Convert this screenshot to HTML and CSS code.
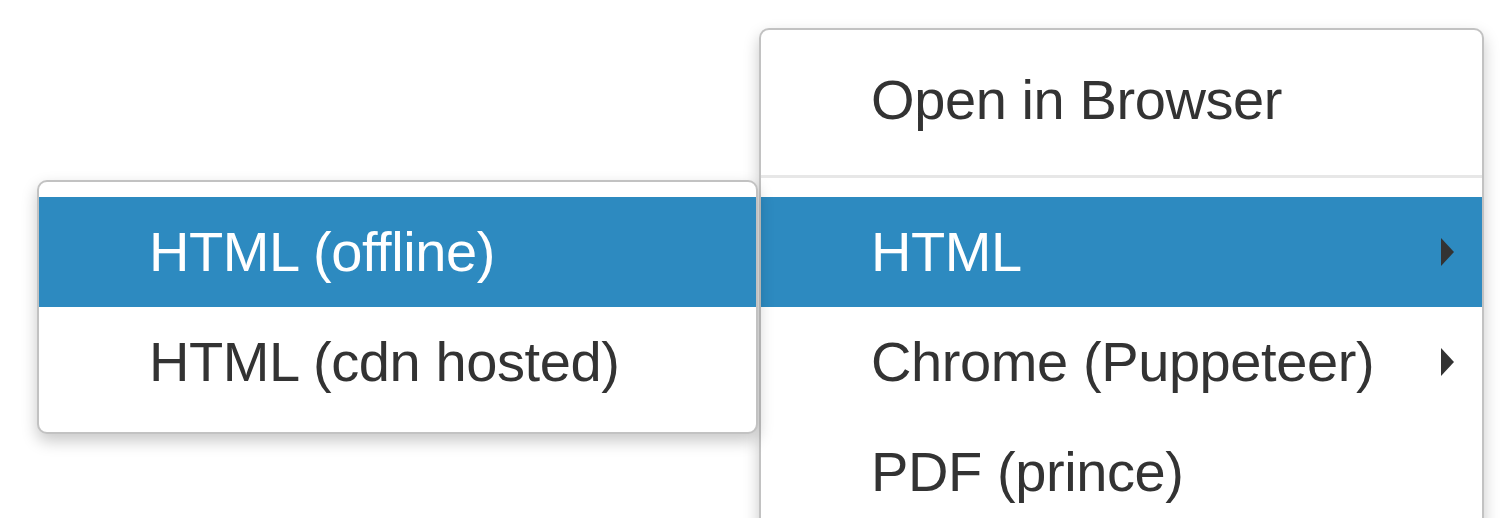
FILE: index.html
```html
<!DOCTYPE html>
<html lang="en">
<head>
  <meta charset="UTF-8" />
  <title>Export menu</title>
  <link rel="stylesheet" href="styles.css">
</head>
<body>
  <ul class="menu main-menu">
    <li class="item">Open in Browser</li>
    <li class="divider"></li>
    <li class="item has-sub active">
      HTML
      <span class="caret"></span>
      <ul class="menu sub-menu">
        <li class="item active">HTML (offline)</li>
        <li class="item">HTML (cdn hosted)</li>
      </ul>
    </li>
    <li class="item has-sub">
      Chrome (Puppeteer)
      <span class="caret"></span>
    </li>
    <li class="item">PDF (prince)</li>
  </ul>
</body>
</html>
```

FILE: styles.css
```css
html, body {
  margin: 0;
  padding: 0;
  height: 100%;
  background: #ffffff;
  overflow: hidden;
  font-family: "Liberation Sans", Arial, sans-serif;
  color: #333333;
}

.menu {
  list-style: none;
  margin: 0;
  padding: 15px 0;
  background: #ffffff;
  border: 2px solid rgba(0, 0, 0, 0.24);
  border-radius: 10px;
  box-shadow: 0 7px 16px rgba(0, 0, 0, 0.22);
}

/* the open dropdown floats over the page */
.main-menu {
  position: absolute;
  top: 28px;
  left: 759px;
  width: 721px;
  height: 600px;
}

.item {
  position: relative;
  padding: 13px 20px 13px 110px;
  font-size: 56px;
  line-height: 84px;
  letter-spacing: -0.4px;
  white-space: nowrap;
}

.item.active {
  background: #2d8ac0;
  color: #ffffff;
}

.divider {
  height: 3px;
  margin: 20px 0 19px;
  background: #e7e7e7;
}

.caret {
  position: absolute;
  right: 28px;
  top: 50%;
  margin-top: -14px;
  width: 0;
  height: 0;
  border-top: 14px solid transparent;
  border-bottom: 14px solid transparent;
  border-left: 13px solid #333333;
}

.sub-menu {
  position: absolute;
  top: -17px;
  right: calc(100% + 3px);
  width: 717px;
  color: #333333;
  z-index: 2;
}
```
